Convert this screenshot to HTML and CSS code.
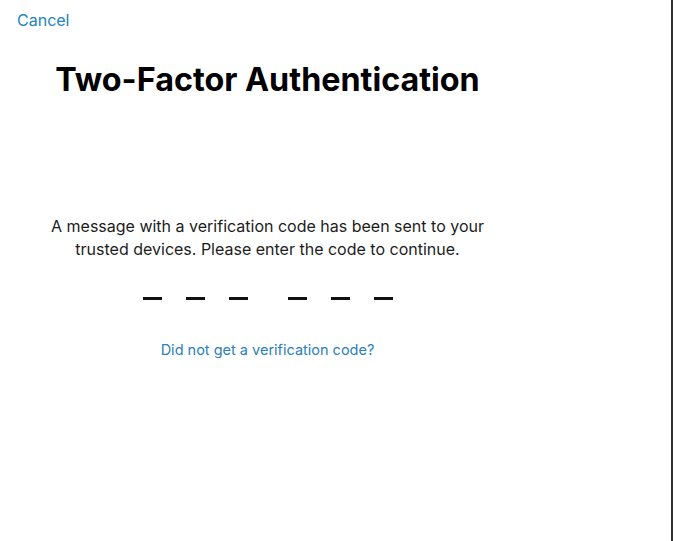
FILE: index.html
```html
<!DOCTYPE html>
<html>
<head>
<meta charset="utf-8">
<link rel="stylesheet" href="styles.css">
</head>
<body>
<div class="frame">
  <div class="main">
    <a class="cancel" href="#">Cancel</a>
    <h1 class="title">Two-Factor Authentication</h1>
    <p class="message">A message with a verification code has been sent to your<br>trusted devices. Please enter the code to continue.</p>
    <div class="code">
      <div class="group">
        <span class="dash"></span><span class="dash"></span><span class="dash"></span>
      </div>
      <div class="group">
        <span class="dash"></span><span class="dash"></span><span class="dash"></span>
      </div>
    </div>
    <a class="resend" href="#">Did not get a verification code?</a>
  </div>
  <div class="edge"></div>
</div>
</body>
</html>
```
FILE: styles.css
```css
html, body {
  margin: 0;
  padding: 0;
  background: #ffffff;
}
body {
  font-family: Inter, "Noto Sans", sans-serif;
  width: 674px;
  height: 541px;
  overflow: hidden;
}
.frame {
  display: flex;
  height: 541px;
}
.main {
  flex: 1;
  display: flex;
  flex-direction: column;
  align-items: center;
  padding-right: 136px;
}
.cancel {
  align-self: flex-start;
  margin: 10px 0 0 17px;
  font-size: 16px;
  line-height: 20px;
  color: #2483c0;
  text-decoration: none;
}
.title {
  margin: 30px 0 0 0;
  font-size: 32.3px;
  line-height: 40px;
  font-weight: 700;
  color: #000;
  letter-spacing: 0;
}
.message {
  margin: 115px 0 0 0;
  font-size: 16px;
  line-height: 23px;
  color: #1c1c1c;
  text-align: center;
}
.code {
  display: flex;
  gap: 40px;
  margin-top: 36px;
}
.group {
  display: flex;
  gap: 24px;
}
.dash {
  width: 19px;
  height: 3px;
  background: #111;
}
.resend {
  margin-top: 40px;
  font-size: 14.5px;
  line-height: 20px;
  color: #2a80b9;
  text-decoration: none;
}
.edge {
  width: 2px;
  background: #333;
  margin-right: 1px;
}
```
